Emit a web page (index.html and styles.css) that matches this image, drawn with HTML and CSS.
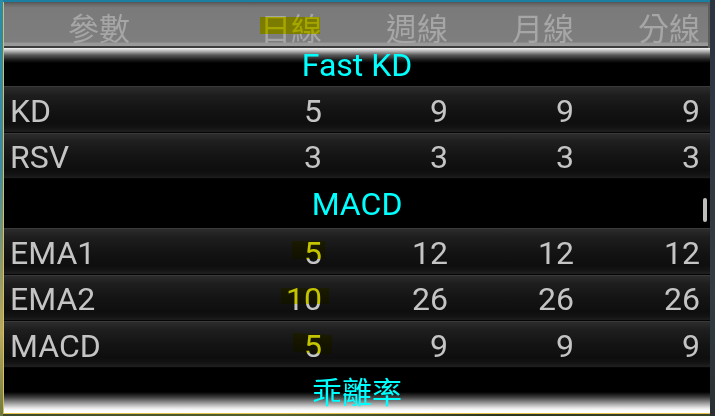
FILE: index.html
```html
<!DOCTYPE html>
<html lang="zh-Hant">
<head>
<meta charset="utf-8">
<title>參數</title>
<link rel="stylesheet" href="styles.css">
</head>
<body>
<div class="screen">
  <div class="side-left"></div>
  <div class="center">
    <div class="topline"></div>
    <div class="panel">
      <div class="head">
        <div class="hc first">參數</div>
        <div class="hc"><span class="mark mark-head">日線</span></div>
        <div class="hc">週線</div>
        <div class="hc">月線</div>
        <div class="hc">分線</div>
      </div>
      <div class="list">
        <div class="sec sec-top">Fast KD</div>
        <div class="row">
          <div class="lbl">KD</div><div class="val">5</div><div class="val">9</div><div class="val">9</div><div class="val">9</div>
        </div>
        <div class="row">
          <div class="lbl">RSV</div><div class="val">3</div><div class="val">3</div><div class="val">3</div><div class="val">3</div>
        </div>
        <div class="sec sec-mid">MACD</div>
        <div class="row">
          <div class="lbl">EMA1</div><div class="val"><span class="mark mark-a">5</span></div><div class="val">12</div><div class="val">12</div><div class="val">12</div>
        </div>
        <div class="row">
          <div class="lbl">EMA2</div><div class="val"><span class="mark mark-b">10</span></div><div class="val">26</div><div class="val">26</div><div class="val">26</div>
        </div>
        <div class="row">
          <div class="lbl">MACD</div><div class="val"><span class="mark mark-c">5</span></div><div class="val">9</div><div class="val">9</div><div class="val">9</div>
        </div>
        <div class="sec sec-bottom">乖離率</div>
        <div class="scrollbar"></div>
      </div>
    </div>
    <div class="bottomline"></div>
  </div>
  <div class="side-right"></div>
</div>
</body>
</html>
```
FILE: styles.css
```css
* { box-sizing: border-box; }
html, body { margin: 0; padding: 0; }
body {
  width: 715px;
  height: 416px;
  overflow: hidden;
  background: #2f3a28;
  font-family: Roboto, "Noto Sans CJK TC", sans-serif;
}
.screen {
  display: flex;
  width: 715px;
  height: 416px;
}
.side-left {
  width: 3px;
  background: linear-gradient(to bottom, #2a8cab 0%, #3f8aa0 40%, #8f9a6a 65%, #b8a860 80%, #6f7a40 100%);
}
.center {
  width: 707px;
  display: flex;
  flex-direction: column;
}
.topline {
  height: 2px;
  background: #1b7fa1;
}
.panel {
  height: 411px;
  border-left: 1px solid #d8c060;
  display: flex;
  flex-direction: column;
}
.bottomline {
  height: 3px;
  border-top: 1px solid #e6c24e;
  background: linear-gradient(to right, #3d4a2c, #55622f 40%, #2a3522 70%, #3a4628);
}
.side-right {
  width: 5px;
  background: linear-gradient(to bottom, #2a3540, #323c44 70%, #2a3030);
}

/* header */
.head {
  height: 46px;
  display: grid;
  grid-template-columns: 202px repeat(4, 126px);
  align-items: center;
  background: linear-gradient(to bottom, #555 0px, #6c6c6c 3px, #7a7a7a 6px, #7e7e7e 40px, #989898 41px, #9a9a9a 44px, #3c3c3c 44.5px, #3c3c3c 46px);
  border-right: 2px solid #5e5e5e;
  font-family: "Noto Sans CJK TC", sans-serif;
  font-size: 31px;
  color: #a6a6a6;
  padding-top: 4px;
}
.hc {
  text-align: right;
  padding-right: 10px;
  line-height: 30px;
  white-space: nowrap;
}
.hc.first {
  text-align: center;
  padding-right: 12px;
}

/* list */
.list {
  position: relative;
  flex: 1;
  display: flex;
  flex-direction: column;
  background: #000;
}
.sec {
  color: #00ffff;
  text-align: center;
  font-size: 32px;
  line-height: 30px;
}
.sec-top {
  height: 38px;
  padding-top: 2px;
  background: linear-gradient(to bottom, #f4f4f4 0px, #b8b8b8 3px, #5a5a5a 7px, #1a1a1a 12px, #000 15px);
}
.sec-mid {
  height: 49px;
  padding-top: 10px;
}
.sec-bottom {
  flex: 1;
  padding-top: 7px;
  font-family: "Noto Sans CJK TC", sans-serif;
  font-size: 30px;
  background: linear-gradient(to bottom, #000 0px, #000 24px, #3a3a3a 29px, #9a9a9a 35px, #e6e6e6 40px, #fafafa 42px, #fff 44px);
}
.row {
  height: 46.5px;
  display: grid;
  grid-template-columns: 202px repeat(4, 126px);
  align-items: center;
  font-size: 32px;
  color: #c4c4c4;
  border-top: 1px solid #3a3a3a;
  border-bottom: 1px solid #050505;
  background: linear-gradient(to bottom, #2c2c2c 0px, #1e1e1e 8px, #141414 22px, #0e0e0e 36px, #141414 41px, #1e1e1e 44px);
}
.lbl {
  padding-left: 6px;
  padding-top: 3px;
  line-height: 36px;
}
.val {
  text-align: right;
  padding-right: 10px;
  padding-top: 3px;
  line-height: 36px;
}

/* highlight marker overlays (multiply yellow) */
.mark {
  position: relative;
  display: inline-block;
}
.mark::after {
  content: "";
  position: absolute;
  background: #ffff00;
  mix-blend-mode: multiply;
}
.mark-head::after {
  left: 0;
  right: 2px;
  top: 5px;
  height: 17px;
}
.mark-a::after {
  left: -12px;
  right: -3px;
  top: 6px;
  height: 18px;
}
.mark-b::after {
  left: -5px;
  right: -7px;
  top: 7px;
  height: 16px;
}
.mark-c::after {
  left: -11px;
  right: -10px;
  top: 6px;
  height: 19px;
  transform: skewY(4deg);
}

.scrollbar {
  position: absolute;
  right: 3px;
  top: 150px;
  width: 4px;
  height: 24px;
  border-radius: 2px;
  background: #bdbdbd;
}
```
